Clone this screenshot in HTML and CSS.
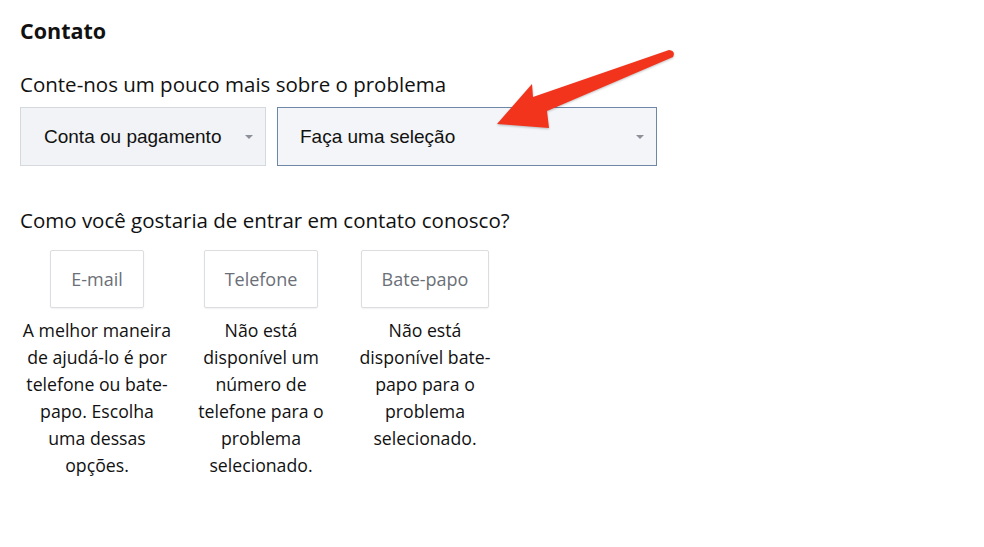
FILE: index.html
```html
<!DOCTYPE html>
<html lang="pt-BR">
<head>
    <meta charset="UTF-8">
    <title>Contato</title>
    <link rel="stylesheet" href="styles.css">
</head>
<body>
    <div class="page">
        <h1 class="title">Contato</h1>

        <p class="question">Conte-nos um pouco mais sobre o problema</p>
        <div class="selects">
            <div class="select select-first">
                <span>Conta ou pagamento</span>
                <span class="caret"></span>
            </div>
            <div class="select select-active">
                <span>Faça uma seleção</span>
                <span class="caret"></span>
            </div>

            <!-- annotation arrow drawn over the screenshot -->
            <svg class="pointer" width="200" height="100" viewBox="0 0 200 100" xmlns="http://www.w3.org/2000/svg">
                <path d="M7 83 L42 43 L43 56 L179 9 Q186 10 183 16 L57 70 L59 87 Z" fill="#f3341c" />
            </svg>
        </div>

        <p class="question question-contact">Como você gostaria de entrar em contato conosco?</p>
        <div class="options">
            <div class="option">
                <button class="option-btn">E-mail</button>
                <p class="option-text">A melhor maneira de ajudá-lo é por telefone ou bate-papo. Escolha uma dessas opções.</p>
            </div>
            <div class="option">
                <button class="option-btn">Telefone</button>
                <p class="option-text">Não está disponível um número de telefone para o problema selecionado.</p>
            </div>
            <div class="option">
                <button class="option-btn">Bate-papo</button>
                <p class="option-text">Não está disponível bate-papo para o problema selecionado.</p>
            </div>
        </div>
    </div>
</body>
</html>
```

FILE: styles.css
```css
* {
    box-sizing: border-box;
    margin: 0;
    padding: 0;
}

body {
    font-family: 'Open Sans', 'Noto Sans', sans-serif;
    background-color: #ffffff;
    color: #111111;
}

.page {
    padding: 17px 20px;
}

.title {
    font-size: 21.5px;
    font-weight: 700;
    line-height: 28px;
}

.question {
    font-size: 20.5px;
    line-height: 26px;
    margin-top: 26px;
}

.selects {
    position: relative;
    display: flex;
    gap: 11px;
    margin-top: 10px;
}

.select {
    display: flex;
    align-items: center;
    justify-content: space-between;
    height: 59px;
    padding: 0 12px 0 23px;
    background-color: #f1f3f6;
    border: 1px solid #d5d9de;
    font-family: 'Liberation Sans', Arial, sans-serif;
    font-size: 19px;
    color: #111111;
}

.select-first {
    width: 246px;
}

.select-active {
    width: 380px;
    padding-left: 22px;
    background-color: #f3f5f8;
    border-color: #6f87a6;
}

.caret {
    width: 0;
    height: 0;
    border-left: 4px solid transparent;
    border-right: 4px solid transparent;
    border-top: 4px solid #8b9099;
}

.pointer {
    position: absolute;
    left: 470px;
    top: -66px;
    filter: drop-shadow(0 1px 1px rgba(0, 0, 0, 0.25));
}

.question-contact {
    margin-top: 41px;
}

.options {
    display: flex;
    gap: 10px;
    margin-top: 17px;
}

.option {
    width: 154px;
    display: flex;
    flex-direction: column;
    align-items: center;
}

.option-btn {
    height: 58px;
    padding: 0 20px;
    background: #ffffff;
    border: 1px solid #dcdde0;
    border-radius: 2px;
    box-shadow: 0 1px 2px rgba(0, 0, 0, 0.06);
    font-family: 'Open Sans', 'Noto Sans', sans-serif;
    font-size: 18px;
    color: #6b6f78;
}

.option-text {
    margin-top: 9px;
    font-size: 17.7px;
    line-height: 27px;
    text-align: center;
}
```
